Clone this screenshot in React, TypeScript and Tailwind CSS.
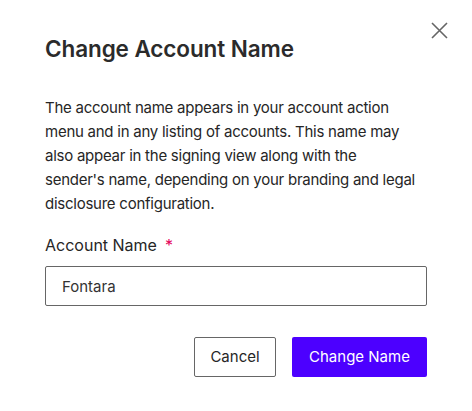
export default function App() {
  return (
    <div className="relative w-[472px] h-[411px] bg-white text-[#1e1e1e] font-['Inter',sans-serif]">
      <button className="absolute right-[24px] top-[22px] text-[#666]">
        <svg width="17" height="17" viewBox="0 0 17 17" fill="none" stroke="currentColor" strokeWidth="1.6">
          <path d="M1 1L16 16M16 1L1 16" />
        </svg>
      </button>
      <div className="px-[45px] pt-[35px]">
        <h2 className="text-[22.5px] leading-[28px] font-semibold text-[#2b2b2b] tracking-[-0.1px]">
          Change Account Name
        </h2>
        <p className="mt-[33px] text-[15px] leading-[24px] text-[#262626] tracking-[-0.25px]">
          The account name appears in your account action menu and in any listing of accounts. This name may also appear in the signing view along with the
          <br />
          sender's name, depending on your branding and legal disclosure configuration.
        </p>
        <label className="mt-[17px] flex items-center text-[16px] leading-[24px] text-[#262626]">
          Account Name
          <span className="ml-[8px] text-[#e4005a]">*</span>
        </label>
        <input
          defaultValue="Fontara"
          className="mt-[9px] w-full h-[40px] px-[16px] border border-[#666] rounded-[2px] text-[15px] text-[#333] outline-none"
        />
        <div className="mt-[31px] flex justify-end gap-[16px]">
          <button className="h-[40px] w-[82px] border border-[#666] rounded-[2px] text-[15px] text-[#262626]">
            Cancel
          </button>
          <button className="h-[40px] w-[135px] bg-[#4c00ff] rounded-[2px] text-[15px] text-white">
            Change Name
          </button>
        </div>
      </div>
    </div>
  );
}
